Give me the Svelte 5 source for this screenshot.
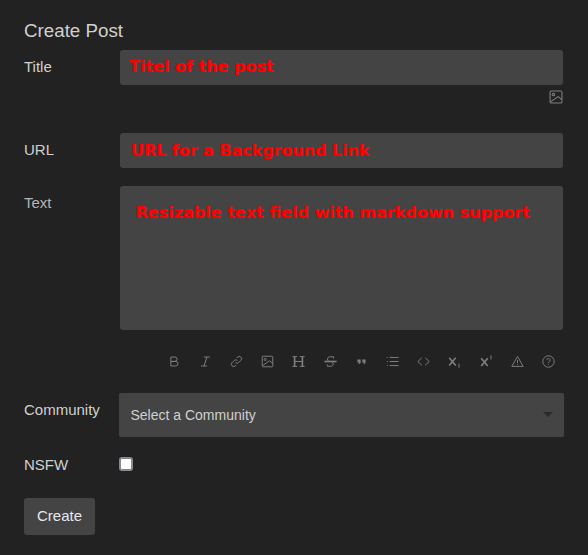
<script lang="ts">
  let title = $state('Titel of the post');
  let url = $state('URL for a Background Link');
  let body = $state('Resizable text field with markdown support');
  let community = $state('');
  let nsfw = $state(false);
</script>

<main class="page">
  <h5>Create Post</h5>
  <form onsubmit={(e) => e.preventDefault()}>
    <div class="row title-row">
      <label for="post-title">Title</label>
      <div class="control">
        <input id="post-title" class="field red pad-title" bind:value={title} />
        <div class="under">
          <svg viewBox="0 0 16 16" width="14" height="14" class="icon">
            <rect x="1.2" y="1.2" width="13.6" height="13.6" rx="1.5" />
            <circle cx="5" cy="5.2" r="1.4" />
            <path d="M1.5 13.5 10.5 7.5l4 3.5" />
          </svg>
        </div>
      </div>
    </div>

    <div class="row url-row">
      <label for="post-url">URL</label>
      <div class="control">
        <input id="post-url" class="field red pad-url" bind:value={url} />
      </div>
    </div>

    <div class="row text-row">
      <label for="post-text" class="dim">Text</label>
      <div class="control">
        <textarea id="post-text" class="field red area" bind:value={body}></textarea>
        <div class="toolbar">
          <button type="button" aria-label="bold">
            <svg viewBox="0 0 16 16" class="icon"><path d="M3.5 2.5h5a2.7 2.7 0 0 1 0 5.4h-5zM3.5 7.9h6a2.8 2.8 0 0 1 0 5.6h-6z" /></svg>
          </button>
          <button type="button" aria-label="italic">
            <svg viewBox="0 0 16 16" class="icon"><path d="M6 2.5h7.5M2.5 13.5H10M9.8 2.5l-3.6 11" /></svg>
          </button>
          <button type="button" aria-label="link">
            <svg viewBox="0 0 16 16" class="icon"><path d="M6.8 9.2a2.8 2.8 0 0 0 4 0l2.6-2.6a2.8 2.8 0 0 0-4-4L8.2 3.8M9.2 6.8a2.8 2.8 0 0 0-4 0L2.6 9.4a2.8 2.8 0 0 0 4 4l1.2-1.2" /></svg>
          </button>
          <button type="button" aria-label="image">
            <svg viewBox="0 0 16 16" class="icon"><rect x="1.5" y="1.5" width="13" height="13" rx="1.2" /><circle cx="5.2" cy="5.5" r="1.3" /><path d="M2 13l8.5-6 4 3.5" /></svg>
          </button>
          <button type="button" aria-label="header">
            <svg viewBox="0 0 16 16" class="icon"><path d="M.5 2h6M.5 14h6M9.5 2h6M9.5 14h6M3.2 8h9.6" /><path class="heavy" d="M3.2 2v12M12.8 2v12" /></svg>
          </button>
          <button type="button" aria-label="strikethrough">
            <svg viewBox="0 0 16 16" class="icon"><path d="M11.8 4.4V2.2H7.2a3 3 0 0 0-1.2 5.7M9.8 8.2a3 3 0 0 1-.8 5.6H4v-2.2" /><path class="heavy" d="M.5 8h15" /></svg>
          </button>
          <button type="button" aria-label="quote">
            <svg viewBox="0 0 16 16" class="icon fill"><path d="M3 5.5h4v3c0 1.5-.9 2.4-2.4 2.7l-.3-.9c.7-.2 1.1-.6 1.2-1.2H3zM9 5.5h4v3c0 1.5-.9 2.4-2.4 2.7l-.3-.9c.7-.2 1.1-.6 1.2-1.2H9z" /></svg>
          </button>
          <button type="button" aria-label="list">
            <svg viewBox="0 0 16 16" class="icon"><path d="M4.5 3h11M4.5 8h11M4.5 13h11M1 3h1.2M1 8h1.2M1 13h1.2" /></svg>
          </button>
          <button type="button" aria-label="code">
            <svg viewBox="0 0 16 16" class="icon"><path d="M5.8 3.5 1 8l4.8 4.5M10.2 3.5 15 8l-4.8 4.5" /></svg>
          </button>
          <button type="button" aria-label="subscript">
            <svg viewBox="0 0 16 16" class="icon"><path class="heavy" d="M1.5 3.5l8 9.5M9.5 3.5l-8 9.5" /><path d="M13.5 10.5v5" /></svg>
          </button>
          <button type="button" aria-label="superscript">
            <svg viewBox="0 0 16 16" class="icon"><path class="heavy" d="M1.5 4l8 9.5M9.5 4l-8 9.5" /><path d="M13.5 .5v5" /></svg>
          </button>
          <button type="button" aria-label="spoiler">
            <svg viewBox="0 0 16 16" class="icon"><path d="M8 1.8 15 14H1zM8 6v4M8 11.4v.9" /></svg>
          </button>
          <button type="button" aria-label="help">
            <svg viewBox="0 0 16 16" class="icon"><circle cx="8" cy="8" r="7" /><path d="M6 6.2a2 2 0 1 1 3 1.8c-.7.4-1 .8-1 1.6M8 11v.9" /></svg>
          </button>
        </div>
      </div>
    </div>

    <div class="row community-row">
      <label for="post-community">Community</label>
      <div class="control select-wrap">
        <select id="post-community" bind:value={community}>
          <option value="">Select a Community</option>
        </select>
        <span class="caret"></span>
      </div>
    </div>

    <div class="row nsfw-row">
      <label for="post-nsfw">NSFW</label>
      <div class="control">
        <input id="post-nsfw" class="check" type="checkbox" bind:checked={nsfw} />
      </div>
    </div>

    <button type="submit" class="create">Create</button>
  </form>
</main>

<style>
  :global(body) {
    background: #222;
    font-family: "Liberation Sans", Arial, sans-serif;
    color: #d0d0d0;
  }
  .page {
    height: 555px;
    box-sizing: border-box;
    padding: 19px 24px 0;
    overflow: hidden;
  }
  h5 {
    margin: 0 0 8px;
    font-size: 18.75px;
    line-height: 23px;
    font-weight: 400;
  }
  .row {
    display: flex;
    align-items: flex-start;
  }
  label {
    width: 96px;
    flex: none;
    font-size: 15px;
    line-height: 17px;
    padding-top: 8px;
  }
  label.dim { color: #b4b4b4; }
  .control {
    flex: 1;
    min-width: 0;
    margin-right: 1px;
  }
  .field {
    display: block;
    width: 100%;
    box-sizing: border-box;
    border: none;
    border-radius: 3px;
    background: #444;
    outline: none;
  }
  .red {
    color: #f00;
    font-family: "DejaVu Sans", Verdana, sans-serif;
    font-weight: 700;
    font-size: 16px;
    -webkit-text-stroke: 0.15px #f00;
  }
  input.field { height: 35px; }
  .pad-title { padding: 0 9px 2px; }
  .pad-url { padding: 0 12px 0 11px; letter-spacing: -0.06px; }
  .area {
    height: 144px;
    padding: 17px 16px 16px 15.5px;
    line-height: 20px;
    resize: none;
  }
  .title-row { height: 83px; }
  .under {
    display: flex;
    justify-content: flex-end;
    padding-top: 5px;
  }
  .url-row { height: 53px; }
  .text-row { height: 207px; }
  .toolbar {
    display: flex;
    justify-content: flex-end;
    margin-top: 22px;
    margin-right: -1px;
  }
  .toolbar button {
    width: 31.2px;
    height: 19px;
    padding: 0;
    border: none;
    background: none;
    display: flex;
    align-items: center;
    justify-content: center;
  }
  .toolbar .icon {
    width: 13px;
    height: 13px;
  }
  .icon {
    display: block;
    fill: none;
    stroke: #808080;
    stroke-width: 1.2;
  }
  .icon.fill { fill: #808080; stroke: none; }
  .icon .heavy { stroke-width: 2; }
  .community-row { height: 62px; }
  .select-wrap {
    position: relative;
    margin-left: -1px;
    margin-right: 0;
  }
  select {
    display: block;
    width: 100%;
    height: 44px;
    box-sizing: border-box;
    padding: 0 11.5px;
    border: none;
    border-radius: 2px;
    background: #444;
    color: #d0d0d0;
    font-family: inherit;
    font-size: 14px;
    appearance: none;
    outline: none;
  }
  .caret {
    position: absolute;
    right: 11px;
    top: 19px;
    border-left: 5px solid transparent;
    border-right: 5px solid transparent;
    border-top: 5px solid #2b2b2b;
    pointer-events: none;
  }
  .nsfw-row { height: 43px; }
  .nsfw-row label { padding-top: 1px; }
  .check {
    display: block;
    width: 14px;
    height: 14px;
    margin: 2px 0 0 -1px;
    box-sizing: border-box;
    appearance: none;
    background: #fff;
    border: 2px solid #8a8893;
    border-radius: 3px;
  }
  .create {
    display: block;
    width: 71px;
    height: 37px;
    padding: 0 0 3px;
    border: none;
    border-radius: 3px;
    background: #444;
    color: #e8e8e8;
    font-family: inherit;
    font-size: 15px;
  }
</style>
